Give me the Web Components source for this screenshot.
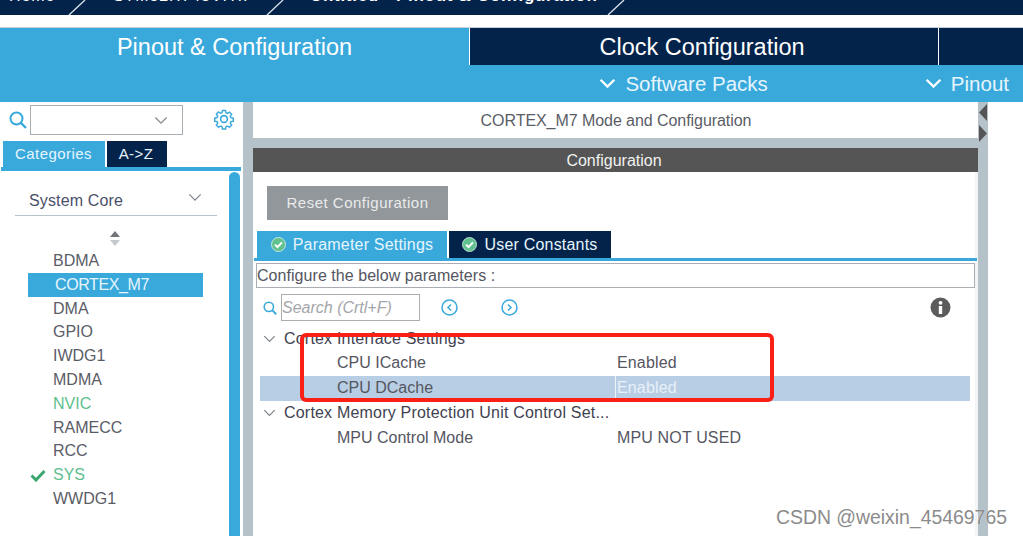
<!DOCTYPE html>
<html lang="en">
<head>
<meta charset="UTF-8">
<title>Pinout &amp; Configuration</title>
<style>
  html, body { margin: 0; height: 536px; overflow: hidden; background: #fff; }
  body { font-family: "Liberation Sans", Arial, sans-serif; color: #4d5059; }
</style>
</head>
<body>

<cube-app>
  <cube-crumbs slot="top"></cube-crumbs>
  <cube-perspectives slot="top"></cube-perspectives>
  <cube-sidebar slot="left"></cube-sidebar>
  <cube-config slot="main"></cube-config>
</cube-app>

<script>
// small helper, every element just sets its shadow html once
class Base extends HTMLElement {
  constructor() {
    super();
    this.attachShadow({ mode: 'open' }).innerHTML = this.markup();
  }
  markup() { return ''; }
}

const chevron = (w, h, color, sw) => `<svg width="${w}" height="${h}" viewBox="0 0 16 10" fill="none" stroke="${color}" stroke-width="${sw}"><path d="M1.5 1.5 8 8l6.5-6.5"/></svg>`;
const magnifier = (s) => `<svg width="${s}" height="${s}" viewBox="0 0 18 18" fill="none" stroke="#39a9dc" stroke-width="2"><circle cx="7.5" cy="7.5" r="6"/><path d="M12 12l5 5" stroke-width="2.4"/></svg>`;
const okBadge = `<svg width="15" height="15" viewBox="0 0 15 15"><circle cx="7.5" cy="7.5" r="7" fill="#62c28f" stroke="#dff3ea" stroke-width=".8"/><path d="M4 7.6l2.5 2.5L11 5.4" fill="none" stroke="#fff" stroke-width="2"/></svg>`;

class CubeApp extends Base {
  markup() { return `
    <style>
      :host { display: block; width: 1023px; height: 536px; position: relative; overflow: hidden; }
      .body { display: grid; grid-template-columns: 243px 10px 725px 10px 1fr; height: 434px; }
      .split { background: #b5c2c9; }
      .rsplit { background: #b5c2c9; position: relative; }
      .rsplit svg { position: absolute; left: 0; }
      .pad { background: #fff; }
      .mark {
        position: absolute; left: 300px; top: 333px; width: 466px; height: 61px;
        border: 4px solid #fb2016; border-radius: 6px;
      }
      .wm {
        position: absolute; left: 776px; top: 507px; font-size: 19.4px; line-height: 20px;
        color: #8b8b8b; text-shadow: 0 0 1px #fff; white-space: nowrap;
      }
    </style>
    <slot name="top"></slot>
    <div class="body">
      <slot name="left"></slot>
      <div class="split"></div>
      <slot name="main"></slot>
      <div class="rsplit">
        <svg style="top:2px" width="10" height="17" viewBox="0 0 10 17"><path d="M9 0v17L1 8.5z" fill="#545554"/></svg>
        <svg style="top:23px" width="10" height="17" viewBox="0 0 10 17"><path d="M1 0v17l8-8.5z" fill="#545554"/></svg>
      </div>
      <div class="pad"></div>
    </div>
    <div class="mark"></div>
    <div class="wm">CSDN @weixin_45469765</div>`; }
}

class CubeCrumbs extends Base {
  markup() {
    const sep = `<svg width="18" height="15" viewBox="0 0 18 15" fill="none" stroke="#dfe5ea" stroke-width="1.3"><path d="M1 15 17 0"/></svg>`;
    return `
    <style>
      :host { display: flex; height: 15px; background: #03234b; overflow: hidden; color: #fff; font-size: 16px; line-height: 19px; white-space: nowrap; }
      span { display: block; margin-top: -14px; letter-spacing: .9px; }
      svg { flex: none; display: block; }
      .home { margin-left: 9px; width: 59px; }
      .mcu { margin-left: 27px; width: 153px; }
      .file { margin-left: 26px; width: 297px; font-size: 17px; font-weight: bold; letter-spacing: .7px; }
    </style>
    <span class="home">Home</span>${sep}
    <span class="mcu">STM32H743VITx</span>${sep}
    <span class="file">Untitled - Pinout &amp; Configuration</span>${sep}`;
  }
}

class CubePerspectives extends Base {
  markup() { return `
    <style>
      :host { display: block; padding-top: 12px; background: #fff; }
      .tabs { display: flex; height: 37px; border-top: 1px solid #c3d0d8; background: #03234b; color: #fff; font-size: 23.5px; line-height: 39px; text-align: center; }
      .tabs div { flex: none; }
      .pin { width: 469px; background: #39a9dc; }
      .clock { width: 464px; padding-right: 4px; border-left: 1px solid #fff; border-right: 1px solid #fff; }
      .sub { display: flex; justify-content: flex-end; height: 37px; background: #39a9dc; color: #e6f5fc; font-size: 20.5px; line-height: 37px; padding-right: 14px; }
      .sub div { display: flex; align-items: center; gap: 9px; }
      .sub div + div { margin-left: 157px; }
    </style>
    <div class="tabs">
      <div class="pin">Pinout &amp; Configuration</div>
      <div class="clock">Clock Configuration</div>
    </div>
    <div class="sub">
      <div>${chevron(17, 11, '#fff', 2.2)}Software Packs</div>
      <div>${chevron(17, 11, '#fff', 2.2)}Pinout</div>
    </div>`; }
}

class CubeSidebar extends Base {
  markup() {
    const names = ['BDMA', 'CORTEX_M7', 'DMA', 'GPIO', 'IWDG1', 'MDMA', 'NVIC', 'RAMECC', 'RCC', 'SYS', 'WWDG1'];
    const rows = names.map(n => {
      let cls = '';
      if (n === 'CORTEX_M7') cls = 'sel';
      if (n === 'NVIC' || n === 'SYS') cls = 'ok';
      const tick = n === 'SYS' ? `<svg class="tick" width="16" height="13" viewBox="0 0 16 13" fill="none" stroke="#3aa56f" stroke-width="3"><path d="M1.5 6.5l4.5 4.5L14.5 2"/></svg>` : '';
      return `<div class="row ${cls}">${tick}${n}</div>`;
    }).join('');
    return `
    <style>
      :host { display: block; background: #fff; overflow: hidden; font-size: 16px; position: relative; }
      .search { display: flex; align-items: center; height: 30px; padding: 3px 0 0 9px; }
      .combo { width: 153px; height: 30px; margin-left: 3px; border: 1px solid #a9aeb3; display: flex; align-items: center; justify-content: flex-end; padding-right: 14px; box-sizing: border-box; }
      .gear { margin-left: 30px; display: block; margin-top: -2px; }
      .tabs { display: flex; gap: 2px; margin: 6px 0 0 3px; height: 26px; color: #e6f5fc; font-size: 15px; letter-spacing: .45px; line-height: 26px; text-align: center; }
      .tabs div { width: 102px; padding-right: 1px; box-sizing: border-box; background: #39a9dc; }
      .tabs div + div { width: 60px; background: #03234b; padding-right: 2px; }
      .line { height: 4px; margin: 0 2px 0 1px; background: #39a9dc; }
      .wrap { display: flex; height: 365px; }
      .list { width: 228px; flex: none; }
      .bar { width: 11px; margin: 1px 0 0 1px; background: #39a9dc; border-radius: 6px 6px 0 0; }
      .cat { display: flex; justify-content: space-between; margin: 17px 11px 0 15px; padding: 0 15px 0 14px; height: 27px; line-height: 26px; border-bottom: 1px solid #b5c2c9; color: #4a4f6a; letter-spacing: .15px; }
      .cat svg { margin-top: 5px; }
      .sort { display: block; margin: 15px 0 3px 109px; }
      .rows { display: flex; flex-direction: column; }
      .row { position: relative; height: 23.8px; line-height: 23.8px; padding-left: 53px; color: #5a5c66; }
      .sel { margin-left: 28px; width: 175px; padding-left: 27px; box-sizing: border-box; background: #39a9dc; color: #e6f5fc; letter-spacing: -.4px; }
      .ok { color: #5cbf8f; }
      .tick { position: absolute; left: 30px; top: 6px; }
    </style>
    <div class="search">
      ${magnifier(18)}
      <div class="combo">${chevron(14, 9, '#8b8f93', 1.6)}</div>
      <svg class="gear" width="22" height="22" viewBox="0 0 22 22" fill="none" stroke="#39a9dc" stroke-width="1.6">
        <circle cx="11" cy="11" r="3.4"/>
        <path d="M9.3 1.5h3.4l.5 2.6 1.7.7 2.2-1.5 2.4 2.4-1.5 2.2.7 1.7 2.6.5v3.4l-2.6.5-.7 1.7 1.5 2.2-2.4 2.4-2.2-1.5-1.7.7-.5 2.6H9.3l-.5-2.6-1.7-.7-2.2 1.5-2.4-2.4 1.5-2.2-.7-1.7-2.6-.5V9.9l2.6-.5.7-1.7-1.5-2.2 2.4-2.4 2.2 1.5 1.7-.7z" transform="translate(1.1 1.1) scale(.9)"/>
      </svg>
    </div>
    <div class="tabs"><div>Categories</div><div>A-&gt;Z</div></div>
    <div class="line"></div>
    <div class="wrap">
      <div class="list">
        <div class="cat">System Core ${chevron(14, 9, '#7d8489', 1.4)}</div>
        <svg class="sort" width="12" height="15" viewBox="0 0 12 15"><path d="M6 0l5 6H1z" fill="#6f7478"/><path d="M6 15l5-6H1z" fill="#c5c9cc"/></svg>
        <div class="rows">${rows}</div>
      </div>
      <div class="bar"></div>
    </div>`;
  }
}

class CubeTreeRow extends Base {
  static get observedAttributes() { return ['name', 'value']; }
  markup() { return `
    <style>
      :host { display: grid; grid-template-columns: 357px 1fr; height: 24.8px; line-height: 24.8px; margin-left: 7px; width: 710px; color: #55565f; }
      :host([selected]) { background: #b8cee4; }
      :host([selected]) .val { color: #e8f0f8; border-left: 1px solid #eef4fa; margin-left: -2px; padding-left: 1px; }
      .name { padding-left: 77px; }
      .val { letter-spacing: .15px; }
      .group { padding-left: 24px; display: flex; align-items: center; white-space: nowrap; color: #3f4250; letter-spacing: .2px; }
      .group svg { position: absolute; margin-left: -21px; }
    </style>
    <div class="name"></div><div class="val"></div>`; }
  attributeChangedCallback() {
    const el = this.shadowRoot.querySelector('.name');
    el.textContent = this.getAttribute('name') || '';
    this.shadowRoot.querySelector('.val').textContent = this.getAttribute('value') || '';
    if (this.hasAttribute('group')) {
      el.className = 'group';
      el.insertAdjacentHTML('afterbegin', chevron(13, 8, '#7d8489', 1.5));
    }
  }
}

class CubeConfig extends Base {
  markup() { return `
    <style>
      :host { display: block; background: #b5c2c9; overflow: hidden; font-size: 16px; }
      .head { height: 36px; background: #fff; text-align: center; line-height: 38px; color: #5a5c66; padding-left: 1px; letter-spacing: -.06px; }
      .title { height: 24px; margin-top: 10px; background: #545554; color: #f2f2f2; text-align: center; line-height: 25px; padding-right: 3px; }
      .content { background: #fff; height: 364px; padding-top: 14px; box-sizing: border-box; border-right: 3px solid #f2f4f6; }
      .reset { width: 181px; height: 34px; margin-left: 14px; background: #92979b; color: #e9ebec; text-align: center; line-height: 33px; font-size: 15px; letter-spacing: .5px; }
      .tabs { display: flex; gap: 2px; margin: 11px 0 0 4px; height: 27px; color: #e6f5fc; letter-spacing: .2px; line-height: 27px; }
      .tabs div { display: flex; align-items: center; justify-content: center; gap: 7px; width: 190px; background: #39a9dc; }
      .tabs div + div { width: 162px; background: #03234b; }
      .line { height: 3px; margin: 0 -2px 0 1px; background: #39a9dc; }
      .desc { margin: 2px 0 0 3px; height: 25px; box-sizing: border-box; border: 1px solid #a9aeb3; line-height: 23px; color: #55565f; letter-spacing: .05px; white-space: nowrap; }
      .tools { display: flex; align-items: center; height: 27px; margin-top: 6px; padding-left: 10px; position: relative; }
      .input { width: 139px; height: 27px; margin-left: 4px; box-sizing: border-box; border: 1px solid #a9aeb3; color: #a3a6aa; font-style: italic; line-height: 25px; white-space: nowrap; }
      .nav { margin-left: 21px; display: block; }
      .nav + .nav { margin-left: 43px; }
      .info { margin-left: auto; margin-right: 24px; display: block; }
      .tree { margin-top: 5.5px; }
    </style>
    <div class="head">CORTEX_M7 Mode and Configuration</div>
    <div class="title">Configuration</div>
    <div class="content">
      <div class="reset">Reset Configuration</div>
      <div class="tabs">
        <div>${okBadge}Parameter Settings</div>
        <div>${okBadge}User Constants</div>
      </div>
      <div class="line"></div>
      <div class="desc">Configure the below parameters :</div>
      <div class="tools">
        ${magnifier(14)}
        <div class="input">Search (Crtl+F)</div>
        <svg class="nav" width="17" height="17" viewBox="0 0 17 17" fill="none" stroke="#39a9dc" stroke-width="1.5"><circle cx="8.5" cy="8.5" r="7.5"/><path d="M10 5.5l-3 3 3 3"/></svg>
        <svg class="nav" width="17" height="17" viewBox="0 0 17 17" fill="none" stroke="#39a9dc" stroke-width="1.5"><circle cx="8.5" cy="8.5" r="7.5"/><path d="M7 5.5l3 3-3 3"/></svg>
        <svg class="info" width="21" height="21" viewBox="0 0 21 21"><circle cx="10.5" cy="10.5" r="10" fill="#5a5b5a"/><rect x="8.8" y="9" width="3.4" height="8" fill="#fff"/><circle cx="10.5" cy="5.8" r="1.9" fill="#fff"/></svg>
      </div>
      <div class="tree">
        <cube-tree-row group name="Cortex Interface Settings"></cube-tree-row>
        <cube-tree-row name="CPU ICache" value="Enabled"></cube-tree-row>
        <cube-tree-row selected name="CPU DCache" value="Enabled"></cube-tree-row>
        <cube-tree-row group name="Cortex Memory Protection Unit Control Set..."></cube-tree-row>
        <cube-tree-row name="MPU Control Mode" value="MPU NOT USED"></cube-tree-row>
      </div>
    </div>`; }
}

customElements.define('cube-app', CubeApp);
customElements.define('cube-crumbs', CubeCrumbs);
customElements.define('cube-perspectives', CubePerspectives);
customElements.define('cube-sidebar', CubeSidebar);
customElements.define('cube-tree-row', CubeTreeRow);
customElements.define('cube-config', CubeConfig);
</script>
</body>
</html>
